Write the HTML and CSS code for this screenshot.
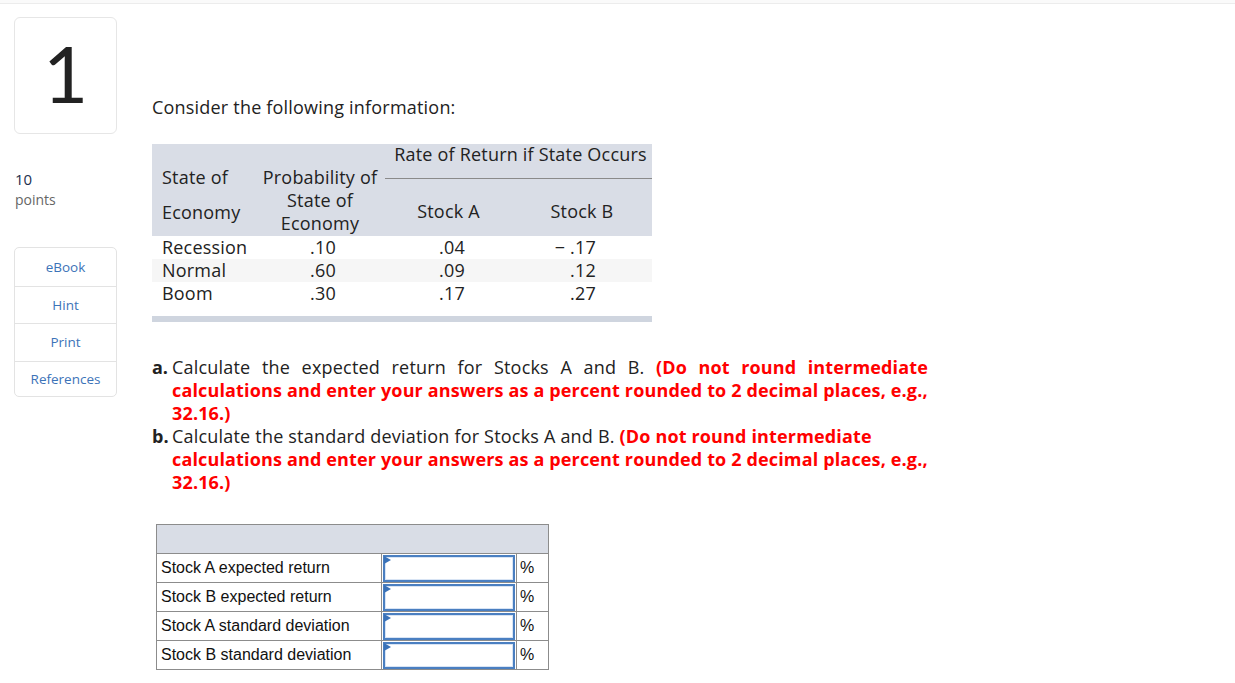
FILE: index.html
```html
<!DOCTYPE html>
<html>
<head>
<meta charset="utf-8">
<link rel="stylesheet" href="styles.css">
</head>
<body>
<div class="topbar"></div>
<div class="page">
  <aside class="side">
    <div class="qnum">1</div>
    <div class="pts"><div class="pts-val">10</div><div class="pts-lbl">points</div></div>
    <ul class="tools">
      <li>eBook</li>
      <li>Hint</li>
      <li>Print</li>
      <li>References</li>
    </ul>
  </aside>
  <main class="main">
    <p class="intro">Consider the following information:</p>
    <div class="data">
      <div class="dhead">
        <div class="c1"><div>State of</div><div class="econ">Economy</div></div>
        <div class="c2"><div>Probability of</div><div>State of</div><div>Economy</div></div>
        <div class="c34">
          <div class="rate">Rate of Return if State Occurs</div>
          <div class="stocks"><div class="c3">Stock A</div><div class="c4">Stock B</div></div>
        </div>
      </div>
      <div class="drow"><div class="c1">Recession</div><div class="c2 n">.10</div><div class="c3 n">.04</div><div class="c4 n">&minus; .17</div></div>
      <div class="drow alt"><div class="c1">Normal</div><div class="c2 n">.60</div><div class="c3 n">.09</div><div class="c4 n">.12</div></div>
      <div class="drow"><div class="c1">Boom</div><div class="c2 n">.30</div><div class="c3 n">.17</div><div class="c4 n">.27</div></div>
      <div class="dfoot"></div>
    </div>
    <ol class="parts">
      <li><b class="lab">a.</b><div class="txt"><span class="just">Calculate the expected return for Stocks A and B. <span class="red">(Do not round intermediate</span></span><span class="red">calculations and enter your answers as a percent rounded to 2 decimal places, e.g.,<br>32.16.)</span></div></li>
      <li><b class="lab">b.</b><div class="txt">Calculate the standard deviation for Stocks A and B. <span class="red">(Do not round intermediate<br>calculations and enter your answers as a percent rounded to 2 decimal places, e.g.,<br>32.16.)</span></div></li>
    </ol>
    <table class="ans">
      <tr class="ahead"><td colspan="3"></td></tr>
      <tr><td class="alab">Stock A expected return</td><td class="ain"><div class="box"></div></td><td class="apct">%</td></tr>
      <tr><td class="alab">Stock B expected return</td><td class="ain"><div class="box"></div></td><td class="apct">%</td></tr>
      <tr><td class="alab">Stock A standard deviation</td><td class="ain"><div class="box"></div></td><td class="apct">%</td></tr>
      <tr><td class="alab">Stock B standard deviation</td><td class="ain"><div class="box"></div></td><td class="apct">%</td></tr>
    </table>
  </main>
</div>
</body>
</html>
```
FILE: styles.css
```css
* { box-sizing: border-box; }
body { margin: 0; background: #fff; font-family: "Open Sans", Lato, sans-serif; color: #222; }
.topbar { height: 4px; background: #fafafa; border-bottom: 1px solid #ececec; }
.page { display: flex; padding-left: 14px; }
.side { width: 103px; flex: none; padding-top: 13px; }
.qnum { height: 117px; border: 1px solid #e6e6e6; border-radius: 6px; display: flex; align-items: center; justify-content: center; font-family: Lato, sans-serif; font-size: 78px; line-height: 1; color: #222; padding-bottom: 6px; }
.pts { margin-top: 36px; padding-left: 1px; }
.pts-val { font-size: 15px; line-height: 19px; color: #1d2f4d; }
.pts-lbl { font-size: 14px; line-height: 19px; color: #666; margin-top: 1px; }
.tools { list-style: none; margin: 38px 0 0; padding: 0; border: 1px solid #e3e3e3; border-radius: 5px; }
.tools li { height: 37.5px; display: flex; align-items: center; justify-content: center; font-size: 13.5px; color: #3c73b8; border-top: 1px solid #e3e3e3; }
.tools li:first-child { border-top: 0; }
.tools li:last-child { height: 35px; }
.main { margin-left: 35px; width: 800px; letter-spacing: 0.2px; }
.intro { margin: 92px 0 0; font-size: 18px; line-height: 23px; }
.data { width: 500px; margin-top: 25px; font-size: 18px; line-height: 23px; }
.dhead { display: flex; background: #d9dde6; height: 92px; white-space: nowrap; }
.c1 { width: 110px; flex: none; padding-left: 10px; white-space: nowrap; }
.c2 { width: 123px; flex: none; text-align: center; padding-right: 4px; white-space: nowrap; }
.c3 { width: 127px; flex: none; text-align: center; }
.c4 { width: 140px; flex: none; text-align: center; }
.dhead .c1, .dhead .c2 { padding-top: 22px; }
.dhead .c2 { margin-left: -3px; width: 126px; }
.econ { margin-top: 12px; }
.c34 { width: 267px; flex: none; }
.rate { line-height: 20px; text-align: center; padding-left: 4px; padding-bottom: 14px; border-bottom: 1px solid #8a8a8a; }
.stocks { display: flex; margin-top: 21px; }
.drow { display: flex; height: 23px; }
.drow.alt { background: #f6f6f6; }
.drow .n { text-align: right; }
.drow .c2 { padding-right: 49px; }
.drow .c3 { padding-right: 47px; }
.drow .c4 { padding-right: 56px; }
.dfoot { height: 6px; background: #cfd5df; margin-top: 11px; }
.parts { list-style: none; margin: 34px 0 0; padding: 0; width: 776px; font-size: 18px; line-height: 23px; }
.parts li { display: flex; }
.lab { width: 20px; flex: none; font-weight: 700; letter-spacing: 0; }
.txt { flex: 1; white-space: nowrap; }
.just { display: block; text-align: justify; text-align-last: justify; }
.red { color: #f00; font-weight: 700; letter-spacing: 0.15px; }
.ans { margin: 30px 0 0 4px; border-collapse: collapse; font-family: "Liberation Sans", Arial, sans-serif; font-size: 16px; color: #111; letter-spacing: 0; }
.ans td { border: 1px solid #8c8c8c; height: 29px; padding: 0; }
.ahead td { background: #d9dde6; }
.alab { width: 225px; padding-left: 4px !important; }
.ain { width: 135px; position: relative; }
.apct { width: 32px; padding-left: 3px !important; }
.box { position: relative; height: 27px; margin: 0 1px; border: 2px solid #4a7fc1; box-shadow: inset 0 0 0 1px #d8e4f4; background: #fff; }
.box::before { content: ""; position: absolute; left: -1px; top: -1px; border-left: 7px solid #3a72b8; border-top: 4px solid transparent; border-bottom: 4px solid transparent; }
```
